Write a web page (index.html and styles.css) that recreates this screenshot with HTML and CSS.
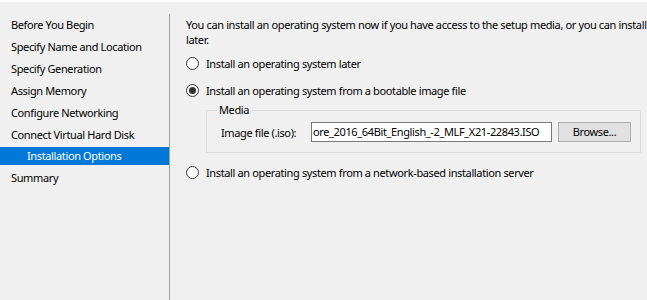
FILE: index.html
```html
<!DOCTYPE html>
<html>
<head>
<meta charset="utf-8">
<link rel="stylesheet" href="styles.css">
</head>
<body>
<div class="window">
  <div class="topline"></div>
  <div class="main">
    <nav class="nav">
      <div class="item">Before You Begin</div>
      <div class="item">Specify Name and Location</div>
      <div class="item">Specify Generation</div>
      <div class="item">Assign Memory</div>
      <div class="item">Configure Networking</div>
      <div class="item">Connect Virtual Hard Disk</div>
      <div class="item selected">Installation Options</div>
      <div class="item">Summary</div>
    </nav>
    <div class="divider"></div>
    <section class="content">
      <p class="intro">You can install an operating system now if you have access to the setup media, or you can install it<br>later.</p>
      <label class="radio first"><span class="circle"></span>Install an operating system later</label>
      <label class="radio"><span class="circle checked"></span>Install an operating system from a bootable image file</label>
      <fieldset class="group">
        <legend>Media</legend>
        <div class="fileRow">
          <span class="fileLabel">Image file (.iso):</span>
          <div class="textbox"><span>ore_2016_64Bit_English_-2_MLF_X21-22843.ISO</span></div>
          <div class="button">Browse...</div>
        </div>
      </fieldset>
      <label class="radio last"><span class="circle"></span>Install an operating system from a network-based installation server</label>
    </section>
  </div>
</div>
</body>
</html>
```
FILE: styles.css
```css
html, body {
  margin: 0;
  padding: 0;
  background: #f0f0f0;
}
body {
  font-family: "Noto Sans", "Open Sans", sans-serif;
  font-size: 11px;
  letter-spacing: -0.37px;
  color: #000;
  width: 647px;
  height: 300px;
  overflow: hidden;
}
.window {
  display: flex;
  flex-direction: column;
  height: 300px;
}
.topline {
  height: 2px;
  background: #fbfbfb;
}
.main {
  display: flex;
  flex: 1;
}
.nav {
  width: 169px;
  padding-top: 14px;
  display: flex;
  flex-direction: column;
}
.item {
  height: 22px;
  line-height: 18px;
  padding-left: 11px;
  white-space: nowrap;
}
.item.selected {
  background: #0078d7;
  color: #fff;
  padding-left: 27px;
  height: 18px;
  margin-top: -1px;
  margin-bottom: 4px;
}
.divider {
  width: 1px;
  background: #a0a0a0;
  margin-top: 12px;
}
.content {
  flex: 1;
  padding-left: 16px;
  padding-top: 15px;
  display: flex;
  flex-direction: column;
  white-space: nowrap;
  overflow: hidden;
}
.intro {
  margin: 0;
  line-height: 15px;
}
.radio {
  display: flex;
  align-items: center;
  gap: 7px;
  height: 18px;
  margin-top: 9px;
}
.radio.first {
  margin-top: 7px;
}
.radio.last {
  margin-top: 10px;
}
.circle {
  width: 11px;
  height: 11px;
  border: 1px solid #333;
  border-radius: 50%;
  background: #fff;
  position: relative;
  flex: none;
}
.circle.checked::after {
  content: "";
  position: absolute;
  left: 2px;
  top: 2px;
  width: 7px;
  height: 7px;
  border-radius: 50%;
  background: #333;
}
.group {
  margin: 3px 6px 0 20px;
  border: 1px solid #dcdcdc;
  padding: 4px 10px 10px 14px;
  min-width: 0;
}
.group legend {
  padding: 0 2px;
  margin-left: -4px;
  line-height: 16px;
}
.fileRow {
  display: flex;
  align-items: center;
  gap: 6px;
}
.fileLabel {
  width: 84px;
  flex: none;
}
.textbox {
  box-sizing: border-box;
  width: 241px;
  height: 20px;
  border: 1px solid #7a7a7a;
  background: #fff;
  overflow: hidden;
  line-height: 18px;
  padding-left: 1px;
  flex: none;
}
.button {
  box-sizing: border-box;
  width: 73px;
  height: 20px;
  line-height: 18px;
  text-align: center;
  background: #e1e1e1;
  border: 1px solid #adadad;
  flex: none;
}
```
